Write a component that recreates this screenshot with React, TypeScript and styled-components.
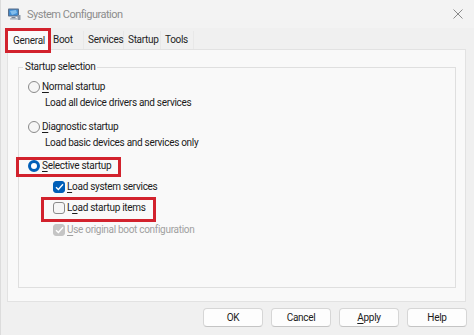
import React from "react";
import styled, { createGlobalStyle, css } from "styled-components";

const GlobalStyle = createGlobalStyle`
  html, body {
    margin: 0;
    padding: 0;
    background: #f3f3f3;
  }
  body {
    font-family: Roboto, "Noto Sans", sans-serif;
    font-size: 10px;
    letter-spacing: -0.3px;
    color: #1b1b1b;
  }
`;

const Window = styled.div`
  width: 474px;
  height: 335px;
  display: flex;
  flex-direction: column;
  background: #f0f0f0;
  box-sizing: border-box;
  border-left: 1px solid #dcdcdc;
  overflow: hidden;
`;

const TitleBar = styled.div`
  height: 28px;
  display: flex;
  align-items: center;
  padding-left: 6px;
  background: #f3f3f3;
  color: #8c8c8c;
  font-size: 11px;
  letter-spacing: -0.5px;
  gap: 6px;
`;

const Title = styled.span`
  flex: 1;
`;

const Close = styled.div`
  width: 30px;
  display: flex;
  justify-content: center;
  margin-right: 1px;
`;

const TabStrip = styled.div`
  height: 21px;
  display: flex;
  align-items: flex-end;
  padding-left: 6px;
`;

const Tab = styled.div<{ $active?: boolean; $w: number }>`
  position: relative;
  width: ${(p) => p.$w}px;
  height: 18px;
  line-height: 17px;
  padding-left: 4px;
  box-sizing: border-box;
  color: #1f1f1f;
  background: #f0f0f0;
  border-right: 1px solid #e8e8e8;
  ${(p) =>
    p.$active &&
    css`
      height: 21px;
      line-height: 22px;
      background: #fbfbfb;
      padding-left: 5px;
      border: 1px solid #e2e2e2;
      border-bottom: none;
      margin-bottom: -1px;
      z-index: 1;
      &::after {
        content: "";
        position: absolute;
        left: -3px;
        right: -3px;
        top: -2px;
        bottom: -3px;
        border: 3px solid #d2222d;
      }
    `}
`;

const Panel = styled.div`
  margin: 0 8px 0 6px;
  height: 253px;
  box-sizing: border-box;
  background: #f9f9f9;
  border: 1px solid #e2e2e2;
  padding: 17px 9px 13px 10px;
`;

const GroupBox = styled.div`
  position: relative;
  height: 100%;
  box-sizing: border-box;
  border: 1px solid #dfdfdf;
  padding: 11px 0 0 9px;
  display: flex;
  flex-direction: column;
  align-items: flex-start;
`;

const Legend = styled.span`
  position: absolute;
  top: -9px;
  left: 4px;
  padding: 0 2px;
  background: #f9f9f9;
  line-height: 16px;
`;

const Row = styled.div<{ $gap?: number; $indent?: number; $mark?: string }>`
  position: relative;
  display: inline-flex;
  align-items: center;
  height: 16px;
  gap: 2px;
  margin-top: ${(p) => p.$gap ?? 0}px;
  margin-left: ${(p) => p.$indent ?? 0}px;
  ${(p) =>
    p.$mark &&
    css`
      &::after {
        content: "";
        position: absolute;
        inset: ${p.$mark};
        border: 3px solid #d2222d;
      }
    `}
`;

const Label = styled.span<{ $disabled?: boolean }>`
  color: ${(p) => (p.$disabled ? "#a0a0a0" : "#1b1b1b")};
  line-height: 16px;
  u {
    text-decoration-thickness: 1px;
    text-underline-offset: 2px;
  }
`;

const Desc = styled.div`
  margin-left: 17px;
  height: 15px;
  line-height: 15px;
  color: #1b1b1b;
`;

const RadioDot = styled.span<{ $on?: boolean }>`
  width: 12px;
  height: 12px;
  border-radius: 50%;
  box-sizing: border-box;
  flex-shrink: 0;
  ${(p) =>
    p.$on
      ? css`
          background: #fff;
          border: 3.5px solid #005fb8;
        `
      : css`
          background: #f6f6f6;
          border: 1px solid #8a8a8a;
        `}
`;

const Check = styled.span<{ $on?: boolean; $disabled?: boolean }>`
  width: 12px;
  height: 12px;
  border-radius: 3px;
  box-sizing: border-box;
  flex-shrink: 0;
  display: flex;
  align-items: center;
  justify-content: center;
  background: ${(p) => (p.$disabled ? "#c5c5c5" : p.$on ? "#005fb8" : "#f6f6f6")};
  border: 1px solid ${(p) => (p.$disabled ? "#c5c5c5" : p.$on ? "#005fb8" : "#8a8a8a")};
`;

const Footer = styled.div`
  flex: 1;
  display: flex;
  justify-content: flex-end;
  align-items: flex-start;
  padding: 6px 7px 0 0;
  gap: 8px;
`;

const Button = styled.button`
  width: 60px;
  height: 19px;
  padding: 0;
  box-sizing: border-box;
  background: #fdfdfd;
  border: 1px solid #d6d6d6;
  border-bottom-color: #c4c4c4;
  border-radius: 4px;
  font-family: inherit;
  font-size: 10px;
  letter-spacing: inherit;
  color: #1b1b1b;
  u {
    text-underline-offset: 2px;
  }
`;

const Tick = () => (
  <svg width="9" height="8" viewBox="0 0 9 8">
    <path d="M1 4.2 L3.4 6.5 L8 1.3" fill="none" stroke="#fff" strokeWidth="1.4" />
  </svg>
);

const AppIcon = () => (
  <svg width="14" height="14" viewBox="0 0 14 14">
    <rect x="1" y="1.5" width="11" height="8" rx="0.8" fill="#5b6f8a" />
    <rect x="2.2" y="2.6" width="8.6" height="5.8" fill="#3f8fd8" />
    <path d="M3 4 L9 3 L10 6 L5 8 Z" fill="#9fd0f5" opacity="0.7" />
    <rect x="4.5" y="10" width="4" height="1.2" fill="#7a8696" />
    <rect x="3" y="11.2" width="7" height="1.4" rx="0.5" fill="#9aa5b3" />
    <rect x="10.5" y="8" width="3" height="5" rx="0.5" fill="#8c98a8" />
  </svg>
);

const CloseIcon = () => (
  <svg width="10" height="10" viewBox="0 0 10 10">
    <path d="M0.5 0.5 L9.5 9.5 M9.5 0.5 L0.5 9.5" stroke="#8a8a8a" strokeWidth="1" />
  </svg>
);

export default function App() {
  return (
    <>
      <GlobalStyle />
      <Window>
        <TitleBar>
          <AppIcon />
          <Title>System Configuration</Title>
          <Close>
            <CloseIcon />
          </Close>
        </TitleBar>
        <TabStrip>
          <Tab $active $w={42}>General</Tab>
          <Tab $w={35}>Boot</Tab>
          <Tab $w={40}>Services</Tab>
          <Tab $w={37}>Startup</Tab>
          <Tab $w={33}>Tools</Tab>
        </TabStrip>
        <Panel>
          <GroupBox>
            <Legend>Startup selection</Legend>
            <Row>
              <RadioDot />
              <Label>
                <u>N</u>ormal startup
              </Label>
            </Row>
            <Desc>Load all device drivers and services</Desc>
            <Row $gap={9}>
              <RadioDot />
              <Label>
                <u>D</u>iagnostic startup
              </Label>
            </Row>
            <Desc>Load basic devices and services only</Desc>
            <Row $gap={8} $mark="-1px -10px -3px -12px">
              <RadioDot $on />
              <Label>
                <u>S</u>elective startup
              </Label>
            </Row>
            <Row $gap={5} $indent={25}>
              <Check $on>
                <Tick />
              </Check>
              <Label>
                <u>L</u>oad system services
              </Label>
            </Row>
            <Row $gap={5} $indent={25} $mark="-3px -10px -6px -12px">
              <Check />
              <Label>
                L<u>o</u>ad startup items
              </Label>
            </Row>
            <Row $gap={6} $indent={25}>
              <Check $on $disabled>
                <Tick />
              </Check>
              <Label $disabled>
                <u>U</u>se original boot configuration
              </Label>
            </Row>
          </GroupBox>
        </Panel>
        <Footer>
          <Button>OK</Button>
          <Button>Cancel</Button>
          <Button>
            <u>A</u>pply
          </Button>
          <Button>Help</Button>
        </Footer>
      </Window>
    </>
  );
}
